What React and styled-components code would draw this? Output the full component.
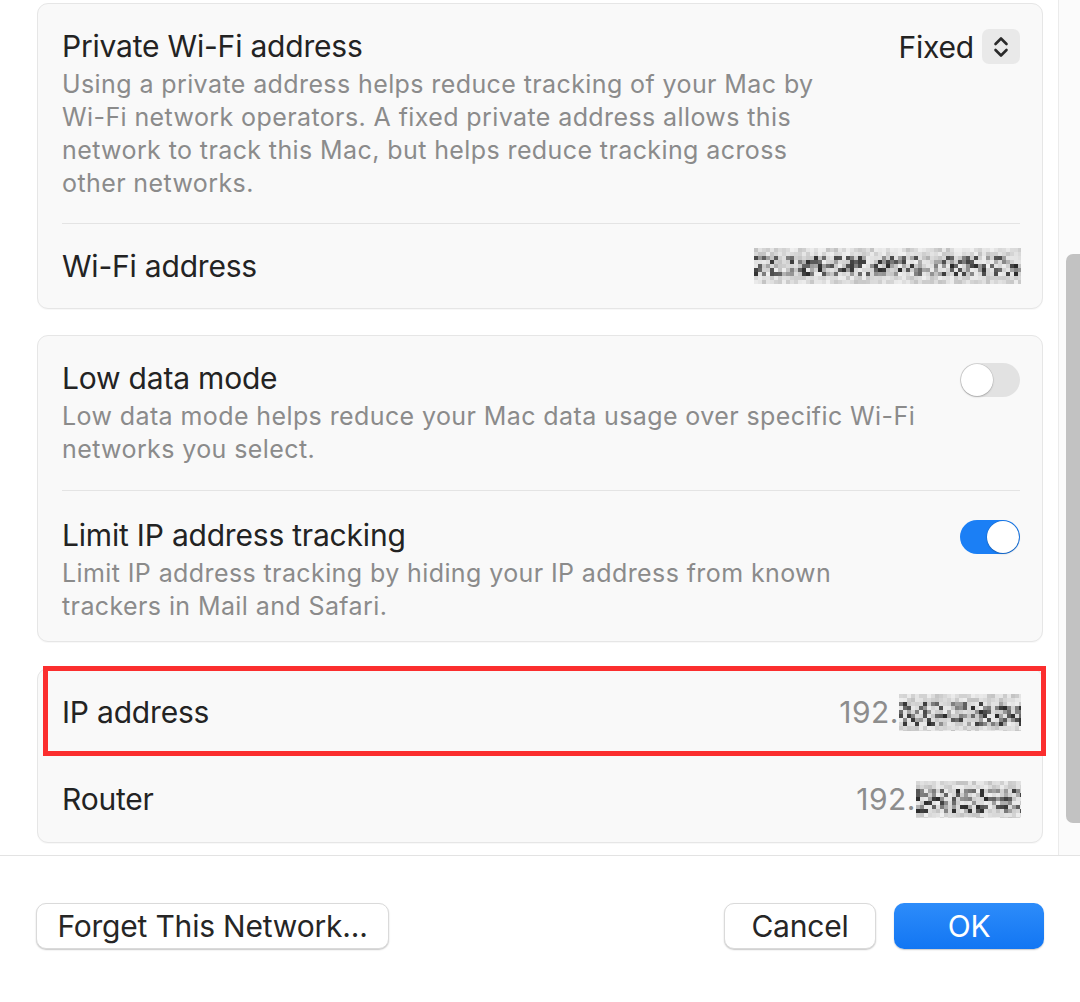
import React from "react";
import styled, { createGlobalStyle } from "styled-components";

const GlobalStyle = createGlobalStyle`
  html, body { margin: 0; padding: 0; background: #ffffff; }
  body { font-family: Inter, "Noto Sans", "Liberation Sans", sans-serif; -webkit-font-smoothing: antialiased; }
  * { box-sizing: border-box; }
`;

const Window = styled.div`
  width: 1080px;
  height: 1002px;
  display: flex;
  flex-direction: column;
  background: #ffffff;
  overflow: hidden;
`;

const ScrollArea = styled.div`
  height: 856px;
  display: flex;
  border-bottom: 1px solid #e3e3e3;
  overflow: hidden;
`;

const Content = styled.div`
  flex: 1;
  display: flex;
  flex-direction: column;
  gap: 26px;
  padding: 3px 15px 0 37px;
`;

const Track = styled.div`
  width: 22px;
  border-left: 1px solid #ebebeb;
  background: #fbfbfb;
  display: flex;
  justify-content: flex-end;
  padding-top: 254px;
`;

const Thumb = styled.div`
  width: 14px;
  height: 569px;
  background: #c2c2c2;
  border-radius: 7px 0 0 7px;
`;

const Card = styled.div`
  background: #f9f9f9;
  border: 1px solid #e6e6e6;
  border-radius: 11px;
  box-shadow: 0 1px 1px rgba(0, 0, 0, 0.03);
  display: flex;
  flex-direction: column;
  flex-shrink: 0;
`;

const DetailRow = styled.div`
  display: flex;
  align-items: flex-start;
  justify-content: space-between;
  gap: 24px;
  padding: ${(p) => p.$pt ?? 25}px 22px ${(p) => p.$pb ?? 23}px 24px;
`;

const SimpleRow = styled.div`
  position: relative;
  height: ${(p) => p.$h || 86}px;
  display: flex;
  align-items: center;
  justify-content: space-between;
  padding: 0 21px 0 24px;
`;

const Divider = styled.div`
  height: 1px;
  background: #e4e4e4;
  margin: 0 22px 0 24px;
`;

const TextCol = styled.div`
  display: flex;
  flex-direction: column;
  gap: 5px;
  max-width: ${(p) => p.$max || 790}px;
`;

const Title = styled.div`
  font-size: 30px;
  line-height: 34px;
  color: #232323;
  letter-spacing: -0.2px;
`;

const Desc = styled.div`
  font-size: 25px;
  line-height: 33px;
  color: #8b8b8b;
  letter-spacing: 0.4px;
`;

const Value = styled.div`
  display: flex;
  align-items: center;
  font-size: 30px;
  letter-spacing: 0.5px;
  color: #8d8d8d;
`;

const SelectBox = styled.div`
  display: flex;
  align-items: center;
  gap: 8px;
  font-size: 30px;
  line-height: 34px;
  color: #232323;
  letter-spacing: -0.2px;
`;

const Stepper = styled.div`
  width: 38px;
  height: 35px;
  border-radius: 7px;
  background: #e9e9e9;
  display: flex;
  align-items: center;
  justify-content: center;
`;

const SwitchTrack = styled.div`
  width: 60px;
  height: 34px;
  border-radius: 17px;
  background: ${(p) => (p.$on ? "#1b7ff5" : "#e2e2e2")};
  display: flex;
  align-items: center;
  justify-content: ${(p) => (p.$on ? "flex-end" : "flex-start")};
  padding: 1px;
  margin-top: 2px;
  flex-shrink: 0;
`;

const Knob = styled.div`
  width: 32px;
  height: 32px;
  border-radius: 50%;
  background: #ffffff;
  box-shadow: 0 0 0 0.5px rgba(0, 0, 0, 0.12), 0 1px 2px rgba(0, 0, 0, 0.2);
`;

const Highlight = styled.div`
  position: absolute;
  left: 5px;
  right: -4px;
  top: -3px;
  bottom: -1px;
  border: 5px solid #fb2e2e;
  pointer-events: none;
`;

const Footer = styled.div`
  flex: 1;
  display: flex;
  align-items: center;
  justify-content: space-between;
  padding: 0 36px 6px 36px;
`;

const ButtonGroup = styled.div`
  display: flex;
  gap: 18px;
`;

const Button = styled.button`
  height: 46px;
  min-width: ${(p) => p.$w || 150}px;
  padding: 0 20px;
  border-radius: 10px;
  font-family: inherit;
  font-size: 30px;
  letter-spacing: -0.2px;
  color: ${(p) => (p.$primary ? "#ffffff" : "#262626")};
  background: ${(p) => (p.$primary ? "linear-gradient(#2d8cfa, #1276f3)" : "#ffffff")};
  border: ${(p) => (p.$primary ? "none" : "1px solid #dadada")};
  box-shadow: 0 1px 1.5px rgba(0, 0, 0, 0.22);
  display: flex;
  align-items: center;
  justify-content: center;
`;

function mulberry(seed) {
  return function () {
    let t = (seed += 0x6d2b79f5);
    t = Math.imul(t ^ (t >>> 15), t | 1);
    t ^= t + Math.imul(t ^ (t >>> 7), t | 61);
    return ((t ^ (t >>> 14)) >>> 0) / 4294967296;
  };
}

function Redacted({ width, height = 36, seed = 1 }) {
  const cell = 4;
  const cols = Math.ceil(width / cell);
  const rows = Math.ceil(height / cell);
  const rnd = mulberry(seed);
  const rects = [];
  for (let r = 0; r < rows; r++) {
    const mid = r > 1 && r < rows - 2;
    for (let c = 0; c < cols; c++) {
      const v = rnd();
      let g;
      if (mid && v < 0.28) g = 40 + Math.floor(rnd() * 70);
      else if (mid && v < 0.5) g = 120 + Math.floor(rnd() * 60);
      else g = 195 + Math.floor(rnd() * 45);
      rects.push(
        <rect key={r * cols + c} x={c * cell} y={r * cell} width={cell} height={cell} fill={`rgb(${g},${g},${g})`} />
      );
    }
  }
  return (
    <svg width={width} height={height} viewBox={`0 0 ${width} ${height}`} style={{ display: "block" }}>
      {rects}
    </svg>
  );
}

function Switch({ on }) {
  return (
    <SwitchTrack $on={on}>
      <Knob />
    </SwitchTrack>
  );
}

function Chevrons() {
  return (
    <svg width="18" height="24" viewBox="0 0 18 24" fill="none" stroke="#2a2a2a" strokeWidth="2.6" strokeLinecap="round" strokeLinejoin="round">
      <path d="M3.5 9 L9 3.5 L14.5 9" />
      <path d="M3.5 15 L9 20.5 L14.5 15" />
    </svg>
  );
}

export default function App() {
  return (
    <>
      <GlobalStyle />
      <Window>
        <ScrollArea>
          <Content>
            <Card>
              <DetailRow>
                <TextCol $max={780}>
                  <Title>Private Wi-Fi address</Title>
                  <Desc>
                    Using a private address helps reduce tracking of your Mac by Wi-Fi network operators. A fixed private address allows this network to track this Mac, but helps reduce tracking across other networks.
                  </Desc>
                </TextCol>
                <SelectBox>
                  Fixed
                  <Stepper>
                    <Chevrons />
                  </Stepper>
                </SelectBox>
              </DetailRow>
              <Divider />
              <SimpleRow $h={84}>
                <Title>Wi-Fi address</Title>
                <Value>
                  <Redacted width={267} seed={7} />
                </Value>
              </SimpleRow>
            </Card>

            <Card>
              <DetailRow $pt={25} $pb={24}>
                <TextCol $max={900}>
                  <Title>Low data mode</Title>
                  <Desc>Low data mode helps reduce your Mac data usage over specific Wi-Fi networks you select.</Desc>
                </TextCol>
                <Switch on={false} />
              </DetailRow>
              <Divider />
              <DetailRow $pt={27} $pb={18}>
                <TextCol $max={800}>
                  <Title>Limit IP address tracking</Title>
                  <Desc>Limit IP address tracking by hiding your IP address from known trackers in Mail and Safari.</Desc>
                </TextCol>
                <Switch on={true} />
              </DetailRow>
            </Card>

            <Card>
              <SimpleRow>
                <Title>IP address</Title>
                <Value>
                  192.
                  <Redacted width={122} height={37} seed={21} />
                </Value>
                <Highlight />
              </SimpleRow>
              <Divider />
              <SimpleRow>
                <Title>Router</Title>
                <Value>
                  192.
                  <Redacted width={105} height={37} seed={42} />
                </Value>
              </SimpleRow>
            </Card>
          </Content>
          <Track>
            <Thumb />
          </Track>
        </ScrollArea>
        <Footer>
          <Button $w={353}>Forget This Network...</Button>
          <ButtonGroup>
            <Button $w={152}>Cancel</Button>
            <Button $primary $w={150}>OK</Button>
          </ButtonGroup>
        </Footer>
      </Window>
    </>
  );
}
